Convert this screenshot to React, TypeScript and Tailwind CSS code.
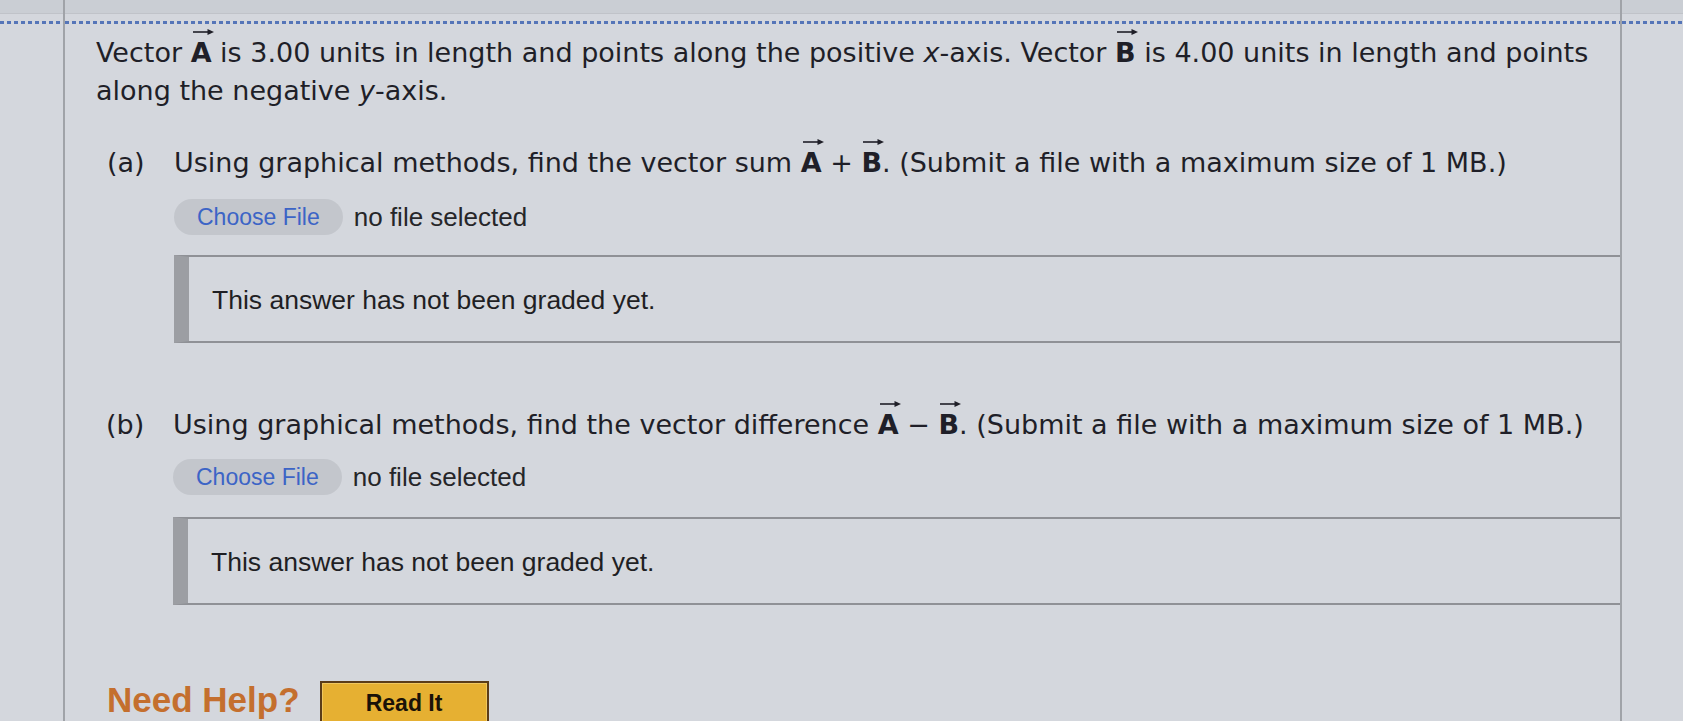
import React from "react"

const Arrow = () => (
  <svg
    className="absolute left-[1px] -top-[7px] w-[23px] h-[10px]"
    viewBox="0 0 23 10"
    fill="none"
  >
    <line x1="1" y1="5" x2="18" y2="5" stroke="#1f1f28" strokeWidth="1.6" />
    <polygon points="15.5,2 22,5 15.5,8" fill="#1f1f28" />
  </svg>
)

const Vec = ({ letter }: { letter: string }) => (
  <span className="relative inline-block font-bold">
    {letter}
    <Arrow />
  </span>
)

const TopStrip = () => (
  <div>
    <div className="h-[14px] bg-[#caced4] border-b border-[#c0c3c9]" />
    <div className="h-[7px]" />
    <div className="h-[3px] bg-[repeating-linear-gradient(90deg,#5575b8_0_4px,transparent_4px_7px)]" />
  </div>
)

const FileInput = () => (
  <div className="flex items-center font-['Liberation_Sans',Arial,sans-serif]">
    <div className="h-[36px] px-[23px] rounded-full bg-[#c3c6cc] flex items-center text-[23px] text-[#3c64c6]">
      Choose File
    </div>
    <span className="ml-[11px] text-[26px] text-[#262629]">no file selected</span>
  </div>
)

const GradeBox = () => (
  <div className="border-l-[15px] border-l-[#9c9ea3] border-y-2 border-y-[#8f9196] pt-[28px] pb-[26px] pl-[23px] font-['Liberation_Sans',Arial,sans-serif] text-[26.5px] leading-[30px] text-[#1f1f24]">
    This answer has not been graded yet.
  </div>
)

export default function App() {
  return (
    <div className="w-full h-[721px] overflow-hidden bg-[#d4d7dd] flex text-[#1f1f28] font-['DejaVu_Sans',Verdana,sans-serif]">
      {/* left margin column */}
      <div className="w-[65px] shrink-0 border-r-2 border-[#a0a3a8]">
        <TopStrip />
      </div>

      {/* main question column */}
      <div className="w-[1557px] shrink-0 border-r-2 border-[#a0a3a8]">
        <TopStrip />

        <div className="pt-[10px] pl-[31px] text-[27px] leading-[38px]">
          <div className="whitespace-nowrap">
            Vector <Vec letter="A" /> is 3.00 units in length and points along the positive <i>x</i>-axis. Vector{" "}
            <Vec letter="B" /> is 4.00 units in length and points
          </div>
          <div className="whitespace-nowrap">
            along the negative <i>y</i>-axis.
          </div>
        </div>

        {/* part (a) */}
        <div className="mt-[34px] flex pl-[42px] text-[27px] leading-[38px]">
          <div className="w-[67px] shrink-0">(a)</div>
          <div className="flex-1">
            <div className="whitespace-nowrap">
              Using graphical methods, find the vector sum <Vec letter="A" /> + <Vec letter="B" />. (Submit a file with a
              maximum size of 1 MB.)
            </div>
            <div className="mt-[16px]">
              <FileInput />
            </div>
            <div className="mt-[19px]">
              <GradeBox />
            </div>
          </div>
        </div>

        {/* part (b) */}
        <div className="mt-[63px] flex pl-[41px] text-[27px] leading-[38px]">
          <div className="w-[67px] shrink-0">(b)</div>
          <div className="flex-1">
            <div className="whitespace-nowrap">
              Using graphical methods, find the vector difference <Vec letter="A" /> − <Vec letter="B" />. (Submit a file
              with a maximum size of 1 MB.)
            </div>
            <div className="mt-[14px]">
              <FileInput />
            </div>
            <div className="mt-[21px]">
              <GradeBox />
            </div>
          </div>
        </div>

        {/* help row */}
        <div className="mt-[76px] pl-[42px] flex items-start font-['Liberation_Sans',Arial,sans-serif]">
          <div className="text-[35px] leading-[38px] font-bold text-[#c46f2e]">Need Help?</div>
          <div className="ml-[20px] w-[169px] h-[48px] border-2 border-[#5b3c18] bg-[#e6b032]">
            <div className="h-full border border-[#f0c75f] text-center pt-[6px] text-[23px] leading-[26px] font-bold text-[#1a1208]">
              Read It
            </div>
          </div>
        </div>
      </div>

      {/* right margin column */}
      <div className="flex-1">
        <TopStrip />
      </div>
    </div>
  )
}
